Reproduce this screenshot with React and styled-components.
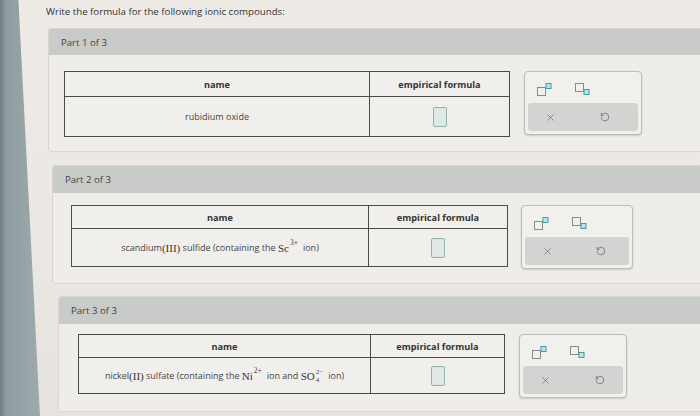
import React from "react";
import styled, { createGlobalStyle } from "styled-components";
import { X, RotateCcw } from "lucide-react";

const Global = createGlobalStyle`
  html, body { margin: 0; padding: 0; }
  body {
    width: 700px; height: 416px; overflow: hidden;
    background: #ebe8e4;
    font-family: "Open Sans", "DejaVu Sans", sans-serif;
    color: #3a3a3a;
  }
`;

const Page = styled.div`
  display: grid;
  grid-template-columns: 40px 1fr;
  width: 700px;
  height: 416px;
  overflow: hidden;
  background: linear-gradient(180deg, #eeebe7 0%, #ebe8e3 60%, #e6e3de 100%);
`;

const Edge = styled.div`
  background: linear-gradient(90deg, #6f7c80 0px, #8e9ca0 6px, #9eaaad 100%);
  clip-path: polygon(0 0, 46% 0, 100% 100%, 0 100%);
`;

const Main = styled.div`
  display: flex;
  flex-direction: column;
  min-width: 0;
`;

const Title = styled.div`
  margin: 4px 0 0 6px;
  height: 16px;
  line-height: 16px;
  font-size: 9.7px;
  color: #333;
`;

const Part = styled.section`
  margin-left: ${(p) => p.$indent}px;
  margin-top: ${(p) => p.$top}px;
  width: 720px;
  border: 1px solid #d9d6d1;
  border-radius: 3px;
  background: #efedea;
  overflow: hidden;
`;

const PartHead = styled.div`
  height: ${(p) => p.$h}px;
  background: #c9cbc9;
  display: flex;
  align-items: center;
  padding-left: 12px;
  font-size: 9.6px;
  color: #444;
`;

const PartBody = styled.div`
  display: flex;
  align-items: flex-start;
  padding: ${(p) => p.$pt}px 0 ${(p) => p.$pb}px ${(p) => p.$pl}px;
`;

const Table = styled.div`
  display: grid;
  grid-template-columns: ${(p) => p.$c1}px ${(p) => p.$c2}px;
  grid-template-rows: ${(p) => p.$r1}px ${(p) => p.$r2}px;
  border: 1px solid #4a4a4a;
  background: #f1efec;
`;

const Cell = styled.div`
  display: flex;
  align-items: center;
  justify-content: center;
  font-size: ${(p) => (p.$head ? 9.2 : 9)}px;
  font-weight: ${(p) => (p.$head ? 700 : 400)};
  color: ${(p) => (p.$head ? "#333" : "#444")};
  border-right: ${(p) => (p.$right ? "1px solid #4a4a4a" : "none")};
  border-bottom: ${(p) => (p.$head ? "1px solid #4a4a4a" : "none")};
  white-space: nowrap;
`;

const AnswerBox = styled.div`
  width: 12px;
  height: 18px;
  border: 1px solid #8fb5ae;
  border-radius: 2px;
  background: #dfe8e5;
`;

const Serif = styled.span`
  font-family: "Liberation Serif", "DejaVu Serif", serif;
  font-size: 11px;
  color: #333;
`;

const Sup = styled.span`
  display: inline-block;
  font-size: 7.5px;
  transform: translateY(-5px);
  margin-left: 1px;
  margin-right: 5px;
  font-family: "Liberation Serif", serif;
`;

const Stack = styled.span`
  display: inline-flex;
  flex-direction: column;
  font-family: "Liberation Serif", serif;
  font-size: 7px;
  line-height: 8px;
  vertical-align: -4px;
  margin: 0 5px 0 1px;
`;

const Tools = styled.div`
  margin-left: ${(p) => p.$gap}px;
  width: ${(p) => p.$w}px;
  height: 64px;
  border: 1px solid #bdbcb9;
  border-radius: 4px;
  background: #f2f0ed;
  box-shadow: 0 1px 2px rgba(0, 0, 0, 0.15);
  display: flex;
  flex-direction: column;
  padding: 3px;
  box-sizing: border-box;
`;

const IconRow = styled.div`
  flex: 1;
  display: flex;
  align-items: center;
  gap: 18px;
  padding-left: 6px;
`;

const ActionRow = styled.div`
  flex: 1;
  display: flex;
  align-items: center;
  gap: ${(p) => p.$spread}px;
  padding-left: 12px;
  border-radius: 3px;
  background: #d3d4d2;
  color: #666;
`;

const Glyph = styled.span`
  display: inline-flex;
  width: 20px;
  justify-content: center;
`;

const SupIcon = () => (
  <svg width="17" height="15" viewBox="0 0 17 15">
    <rect x="1.5" y="5.5" width="8" height="8" fill="none" stroke="#8a8a8a" strokeWidth="1" />
    <rect x="10" y="1.5" width="5" height="5" fill="#bfe2e2" stroke="#3f9ea6" strokeWidth="1" />
  </svg>
);

const SubIcon = () => (
  <svg width="17" height="15" viewBox="0 0 17 15">
    <rect x="1.5" y="1.5" width="8" height="8" fill="none" stroke="#8a8a8a" strokeWidth="1" />
    <rect x="10" y="7.5" width="5" height="5" fill="#bfe2e2" stroke="#3f9ea6" strokeWidth="1" />
  </svg>
);

const parts = [
  {
    label: "Part 1 of 3",
    indent: 8, top: 8, head: 26, pt: 16, pb: 14, pl: 15,
    c1: 305, c2: 139, r1: 25, r2: 39, gap: 14, tw: 118, spread: 35,
    name: <>rubidium oxide</>,
  },
  {
    label: "Part 2 of 3",
    indent: 12, top: 13, head: 27, pt: 12, pb: 14, pl: 18,
    c1: 297, c2: 138, r1: 23, r2: 37, gap: 13, tw: 112, spread: 34,
    name: (
      <>
        scandium<Serif>(III)</Serif>&nbsp;sulfide (containing the&nbsp;<Serif>Sc</Serif>
        <Sup>3+</Sup>ion)
      </>
    ),
  },
  {
    label: "Part 3 of 3",
    indent: 18, top: 12, head: 27, pt: 10, pb: 13, pl: 19,
    c1: 292, c2: 133, r1: 23, r2: 35, gap: 14, tw: 108, spread: 35,
    name: (
      <>
        nickel<Serif>(II)</Serif>&nbsp;sulfate (containing the&nbsp;<Serif>Ni</Serif>
        <Sup>2+</Sup>ion and&nbsp;<Serif>SO</Serif>
        <Stack>
          <span>2−</span>
          <span>4</span>
        </Stack>
        ion)
      </>
    ),
  },
];

export default function App() {
  return (
    <>
      <Global />
      <Page>
        <Edge />
        <Main>
          <Title>Write the formula for the following ionic compounds:</Title>
          {parts.map((p) => (
            <Part key={p.label} $indent={p.indent} $top={p.top}>
              <PartHead $h={p.head}>{p.label}</PartHead>
              <PartBody $pt={p.pt} $pb={p.pb} $pl={p.pl}>
                <Table $c1={p.c1} $c2={p.c2} $r1={p.r1} $r2={p.r2}>
                  <Cell $head $right>name</Cell>
                  <Cell $head>empirical formula</Cell>
                  <Cell $right>{p.name}</Cell>
                  <Cell>
                    <AnswerBox />
                  </Cell>
                </Table>
                <Tools $gap={p.gap} $w={p.tw}>
                  <IconRow>
                    <Glyph><SupIcon /></Glyph>
                    <Glyph><SubIcon /></Glyph>
                  </IconRow>
                  <ActionRow $spread={p.spread}>
                    <Glyph><X size={11} strokeWidth={1.5} /></Glyph>
                    <Glyph><RotateCcw size={10} strokeWidth={1.8} /></Glyph>
                  </ActionRow>
                </Tools>
              </PartBody>
            </Part>
          ))}
        </Main>
      </Page>
    </>
  );
}
